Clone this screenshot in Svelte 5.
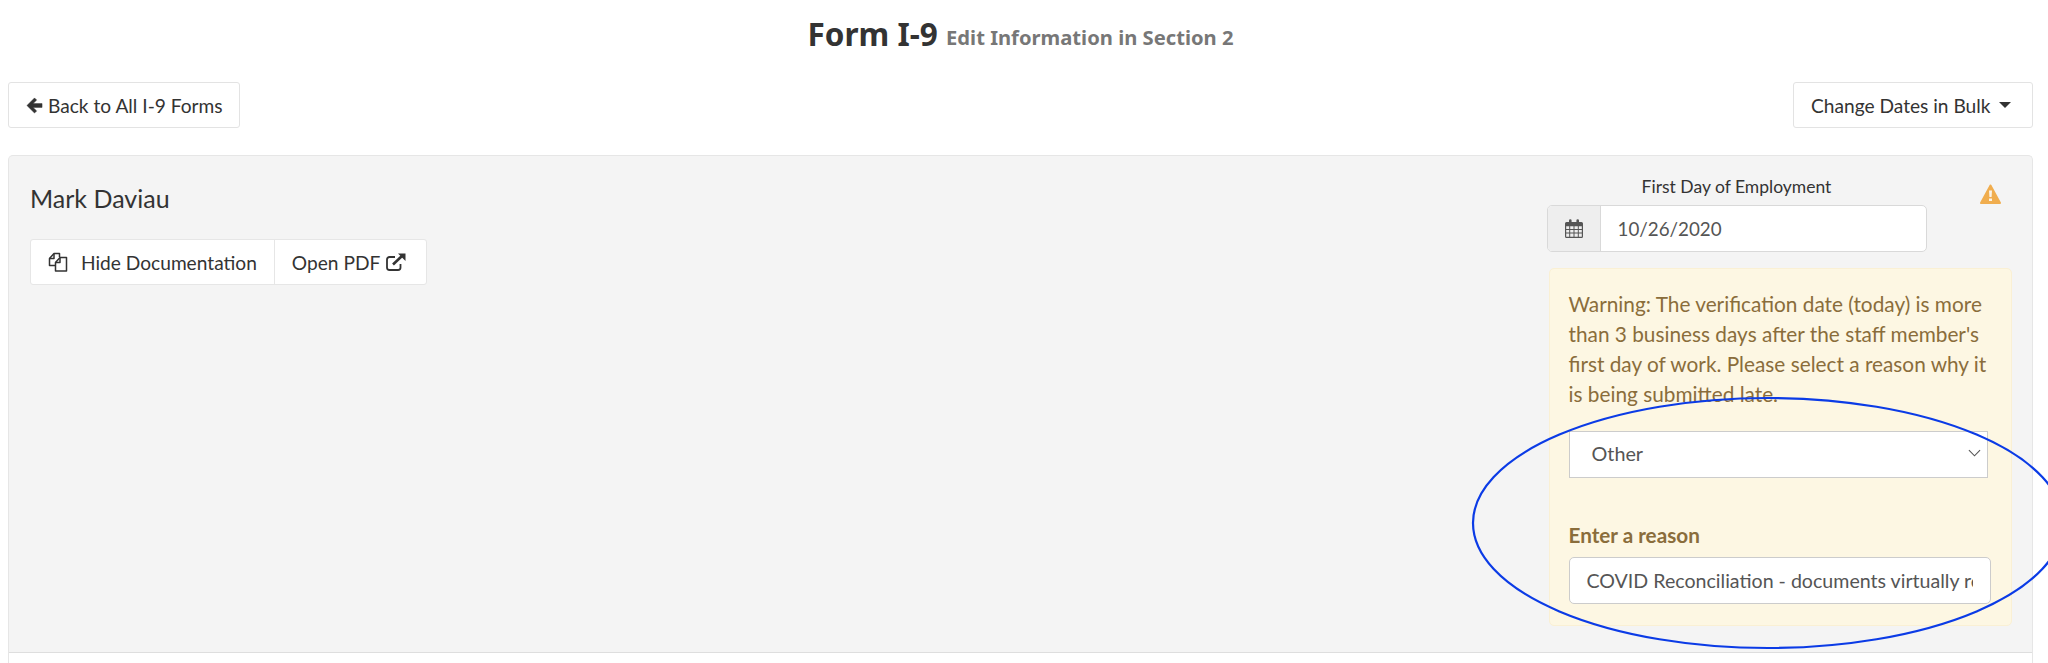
<script>
  const lines = ["Warning: The verification date (today) is more", "than 3 business days after the staff member's", "first day of work. Please select a reason why it", "is being submitted late."];
</script>

<div class="page">
  <h1 class="title">Form I-9 <small>Edit Information in Section 2</small></h1>

  <div class="toolbar">
    <button class="btn back">
      <svg class="arrow" viewBox="0 0 18 18" width="17" height="17"><path d="M9 1 1 9l8 8 2.300-2.300L7.500 11H17V7H7.500l3.800-3.700z" fill="#333" stroke="#333" stroke-width=".5" stroke-linejoin="round"/></svg>
      Back to All I-9 Forms
    </button>
    <button class="btn change">Change Dates in Bulk <span class="caret"></span></button>
  </div>

  <section class="panel">
    <div class="panel-body">
      <div class="left">
        <h2 class="name">Mark Daviau</h2>
        <div class="group">
          <button class="seg">
            <svg class="copy" viewBox="0 0 20 20" width="20" height="20" fill="none" stroke="#333" stroke-width="1.500" stroke-linejoin="round"><path d="M7 13.500H1.500V6.500L6 1.500h5.500V5"/><path d="M6 2v4.500H1.500"/><path d="M7.500 10.500 12 5.500h6.500v13.500h-11z"/><path d="M12 6v4.500H7.500"/></svg>
            Hide Documentation
          </button>
          <button class="seg pdf">
            Open PDF
            <svg class="ext" viewBox="0 0 20 18" width="20" height="18" fill="none" stroke="#333" stroke-width="1.800"><path d="M14.500 11v3.500a2.500 2.500 0 0 1-2.500 2.500H3.500A2.500 2.500 0 0 1 1 14.500V6.500A2.500 2.500 0 0 1 3.500 4H9"/><path d="M7 11.500 16.500 2.500" stroke-width="2.600"/><path d="M12 .5h7.500V8z" fill="#333" stroke="none"/></svg>
          </button>
        </div>
      </div>

      <div class="right">
        <div class="date-row">
          <div class="date-col">
            <div class="date-label">First Day of Employment</div>
            <div class="date-field">
              <span class="addon">
                <svg viewBox="0 0 18 19" width="18" height="19"><path fill="#555" fill-rule="evenodd" d="M1.500 3H4V1.500a1.200 1.200 0 0 1 2.600 0V3h4.800V1.500a1.200 1.200 0 0 1 2.600 0V3h2.500A1.500 1.500 0 0 1 18 4.500V17.500A1.500 1.500 0 0 1 16.500 19H1.500A1.500 1.500 0 0 1 0 17.500V4.500A1.500 1.500 0 0 1 1.500 3ZM1.200 7.200V10h3V7.200ZM5.200 7.200V10H8.500V7.200ZM9.500 7.200V10H12.800V7.200ZM13.800 7.200V10H16.800V7.200ZM1.200 11V13.600H4.200V11ZM5.200 11V13.600H8.500V11ZM9.500 11V13.600H12.800V11ZM13.800 11V13.600H16.800V11ZM1.200 14.600V17.800H4.200V14.600ZM5.200 14.600V17.800H8.500V14.600ZM9.500 14.600V17.800H12.800V14.600ZM13.800 14.600V17.800H16.800V14.600Z"/></svg>
              </span>
              <span class="date-value">10/26/2020</span>
            </div>
          </div>
          <svg class="warn" viewBox="0 0 21 20" width="21" height="20"><path fill="#f0ad4e" stroke="#f0ad4e" stroke-width="2" stroke-linejoin="round" d="M10.500 1.500 1 19h19z"/><path fill="#fbf3e6" d="M9 6.500h3l-.4 6.500H9.400zM9 14.500h3v2.600H9z"/></svg>
        </div>

        <div class="alert">
          <p class="alert-text">{#each lines as line}<span>{line}</span>{/each}</p>
          <div class="select">Other
            <svg viewBox="0 0 14 8" width="13" height="8" fill="none" stroke="#555" stroke-width="1.200"><path d="M1 1l6 6 6-6"/></svg>
          </div>
          <div class="reason-label">Enter a reason</div>
          <input class="input" value="COVID Reconciliation - documents virtually reviewed" />
        </div>
      </div>
    </div>
    <div class="panel-foot"></div>
  </section>

  <svg class="ellipse" viewBox="0 0 2048 663" width="2048" height="663" fill="none"><ellipse cx="1768" cy="523" rx="295" ry="125" stroke="#0b3be6" stroke-width="2.200"/></svg>
</div>

<style>
  :global(body) { margin: 0; background: #fff; }
  .page {
    position: relative;
    width: 2048px;
    height: 663px;
    overflow: hidden;
    font-family: Lato, "Liberation Sans", sans-serif;
    font-size: 19.150px;
    color: #333;
    box-sizing: border-box;
    padding: 0 15px 0 8px;
  }
  .title {
    margin: 0;
    height: 82px;
    padding-top: 15px;
    box-sizing: border-box;
    text-align: center;
    font-family: "Noto Sans", sans-serif;
    font-size: 31.500px;
    font-weight: 700;
    line-height: 38px;
    color: #333;
  }
  .title small {
    font-size: 20.200px;
    font-weight: 700;
    color: #777;
    vertical-align: 1px;
  }
  .toolbar { display: flex; justify-content: space-between; }
  .btn {
    height: 46px;
    padding: 0 17px;
    display: flex;
    align-items: center;
    gap: 5px;
    background: #fff;
    border: 1px solid #e3e3e3;
    border-radius: 3px;
    font: inherit;
    color: #333;
  }
  .back { padding-right: 16px; }
  .change { padding-right: 21.500px; }
  .caret {
    display: inline-block;
    margin-left: 3px;
    border-left: 6.500px solid transparent;
    border-right: 6.500px solid transparent;
    border-top: 6.500px solid #333;
  }
  .panel {
    margin-top: 27px;
    height: 520px;
    box-sizing: border-box;
    background: #f4f4f4;
    border: 1px solid #e6e6e6;
    border-bottom: 0;
    border-radius: 5px 5px 0 0;
    display: flex;
    flex-direction: column;
  }
  .panel-body {
    flex: 1;
    display: flex;
    justify-content: space-between;
    padding: 0 20px 0 21px;
  }
  .panel-foot {
    height: 22px;
    background: #fff;
    border-top: 1px solid #dedede;
  }
  .name {
    margin: 26px 0 0;
    font-size: 25px;
    font-weight: 400;
    line-height: 32px;
    color: #333;
  }
  .group {
    display: flex;
    margin-top: 25px;
    height: 46px;
    background: #fff;
    border: 1px solid #e6e6e6;
    border-radius: 3px;
    box-sizing: border-box;
  }
  .seg {
    display: flex;
    align-items: center;
    border: 0;
    background: none;
    padding: 0 17px;
    font: inherit;
    color: #333;
    gap: 6px;
  }
  .seg + .seg { border-left: 1px solid #e6e6e6; }
  .pdf { padding-right: 19.500px; }
  .copy { margin-right: 7px; }
  .right { width: 463.500px; }
  .date-row { display: flex; }
  .date-col { width: 380px; margin-left: -2px; flex: none; }
  .date-label {
    text-align: center;
    font-size: 17.500px;
    line-height: 24px;
    margin-top: 19px;
  }
  .date-field {
    display: flex;
    height: 47px;
    margin-top: 6px;
    box-sizing: border-box;
    background: #fff;
    border: 1px solid #d9d9d9;
    border-radius: 5px;
    overflow: hidden;
  }
  .addon {
    width: 52px;
    flex: none;
    display: flex;
    align-items: center;
    justify-content: center;
    background: #eee;
    border-right: 1px solid #d9d9d9;
  }
  .date-value {
    display: flex;
    align-items: center;
    padding-left: 17px;
    color: #555;
    font-size: 18.800px;
  }
  .warn { margin: 28px 0 0 53px; flex: none; }
  .alert {
    margin-top: 16px;
    height: 358px;
    box-sizing: border-box;
    background: #fdf7e3;
    border: 1px solid #faf0d4;
    border-radius: 5px;
    padding: 20px 21px 0 19px;
    color: #8a6d3b;
  }
  .alert-text { margin: 0; line-height: 30px; font-size: 20.800px; }
  .alert-text span { display: block; white-space: nowrap; }
  .select {
    margin-top: 22px;
    height: 47px;
    box-sizing: border-box;
    border: 1px solid #ccc;
    background: #fff;
    width: 419px;
    display: flex;
    align-items: center;
    justify-content: space-between;
    padding: 0 6px 4px 22px;
    color: #555;
    line-height: 52px;
    font-size: 19.800px;
  }
  .reason-label {
    margin-top: 43px;
    font-weight: 700;
    line-height: 28px;
    font-size: 20.700px;
  }
  .input {
    display: block;
    margin-top: 8px;
    width: 422px;
    height: 47px;
    box-sizing: border-box;
    background: #fff;
    border: 1px solid #ccc;
    border-radius: 5px;
    padding: 0 17px;
    color: #555;
    font: inherit;
    font-size: 19.600px;
  }
  .ellipse { position: absolute; left: 0; top: 0; pointer-events: none; }
</style>
